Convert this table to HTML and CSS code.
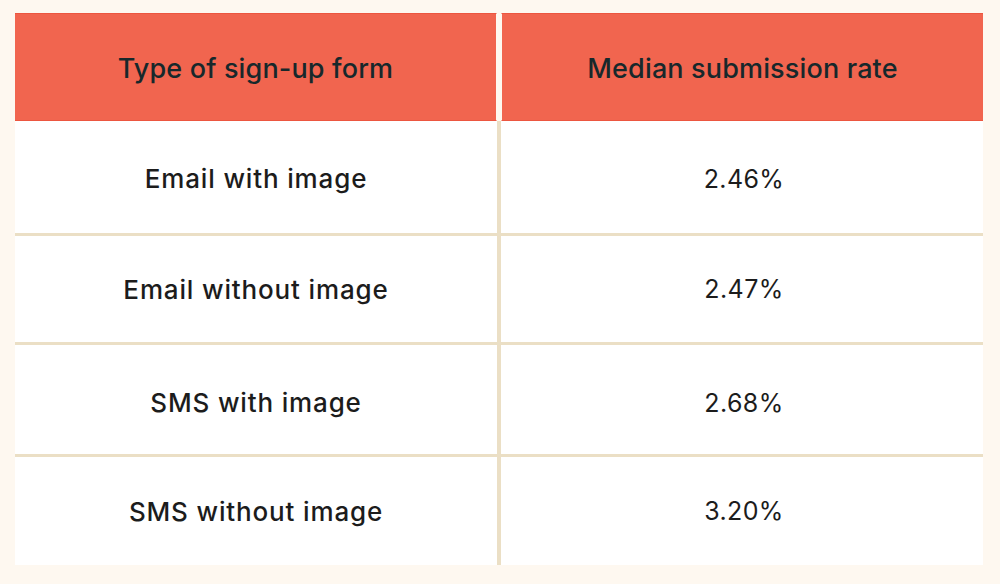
FILE: index.html
```html
<!DOCTYPE html>
<html lang="en">
<head>
<meta charset="utf-8">
<title>Sign-up form submission rates</title>
<link rel="stylesheet" href="styles.css">
</head>
<body>
<div class="page">
  <div class="table">
    <div class="row head">
      <div class="cell hcell hleft">Type of sign-up form</div>
      <div class="gap"></div>
      <div class="cell hcell hright">Median submission rate</div>
    </div>
    <div class="row r1">
      <div class="cell label">Email with image</div>
      <div class="vline"></div>
      <div class="cell value">2.46%</div>
    </div>
    <div class="sep"></div>
    <div class="row r2">
      <div class="cell label">Email without image</div>
      <div class="vline"></div>
      <div class="cell value">2.47%</div>
    </div>
    <div class="sep"></div>
    <div class="row r3">
      <div class="cell label">SMS with image</div>
      <div class="vline"></div>
      <div class="cell value">2.68%</div>
    </div>
    <div class="sep"></div>
    <div class="row r4">
      <div class="cell label">SMS without image</div>
      <div class="vline"></div>
      <div class="cell value">3.20%</div>
    </div>
  </div>
</div>
</body>
</html>
```

FILE: styles.css
```css
html, body {
  margin: 0;
  padding: 0;
}
body {
  background: #fef8f0;
  width: 1000px;
  height: 584px;
  overflow: hidden;
  font-family: Inter, "Liberation Sans", sans-serif;
}
.page {
  padding: 13px 17px 0 15px;
}
.table {
  width: 968px;
  background: #ffffff;
  display: flex;
  flex-direction: column;
}
.row {
  display: grid;
  grid-template-columns: 1fr 4px 1fr;
}
.cell {
  display: flex;
  align-items: center;
  justify-content: center;
}
.head {
  height: 108px;
  background: #fef8f0;
}
.hcell {
  background: #f1654f;
  border-top: 1px solid #ec5640;
  border-bottom: 1px solid #ec5640;
  color: #17282b;
  font-size: 27px;
  font-weight: 500;
  letter-spacing: 0.15px;
  padding-top: 3px;
  box-sizing: border-box;
}
.hleft {
  border-right: 1px solid #fef8f0;
}
.hright {
  border-left: 1px solid #fef8f0;
}
.gap {
  background: #fef8f0;
}
.vline {
  background: #ebdfc5;
}
.sep {
  height: 3px;
  background: #ebdfc5;
}
.r1 { height: 112px; }
.r2 { height: 106px; }
.r3 { height: 109px; }
.r4 { height: 108px; }
.label {
  color: #1c1c1c;
  font-size: 26px;
  font-weight: 500;
  letter-spacing: 0.85px;
  padding-top: 2px;
}
.r2 .cell { padding-top: 0; }
.r3 .cell { padding-top: 6px; }
.r4 .cell { padding-top: 0; }
.value {
  color: #1c1c1c;
  font-size: 25px;
  font-weight: 400;
  letter-spacing: 0.4px;
  padding-top: 4px;
  padding-left: 4px;
}
```
